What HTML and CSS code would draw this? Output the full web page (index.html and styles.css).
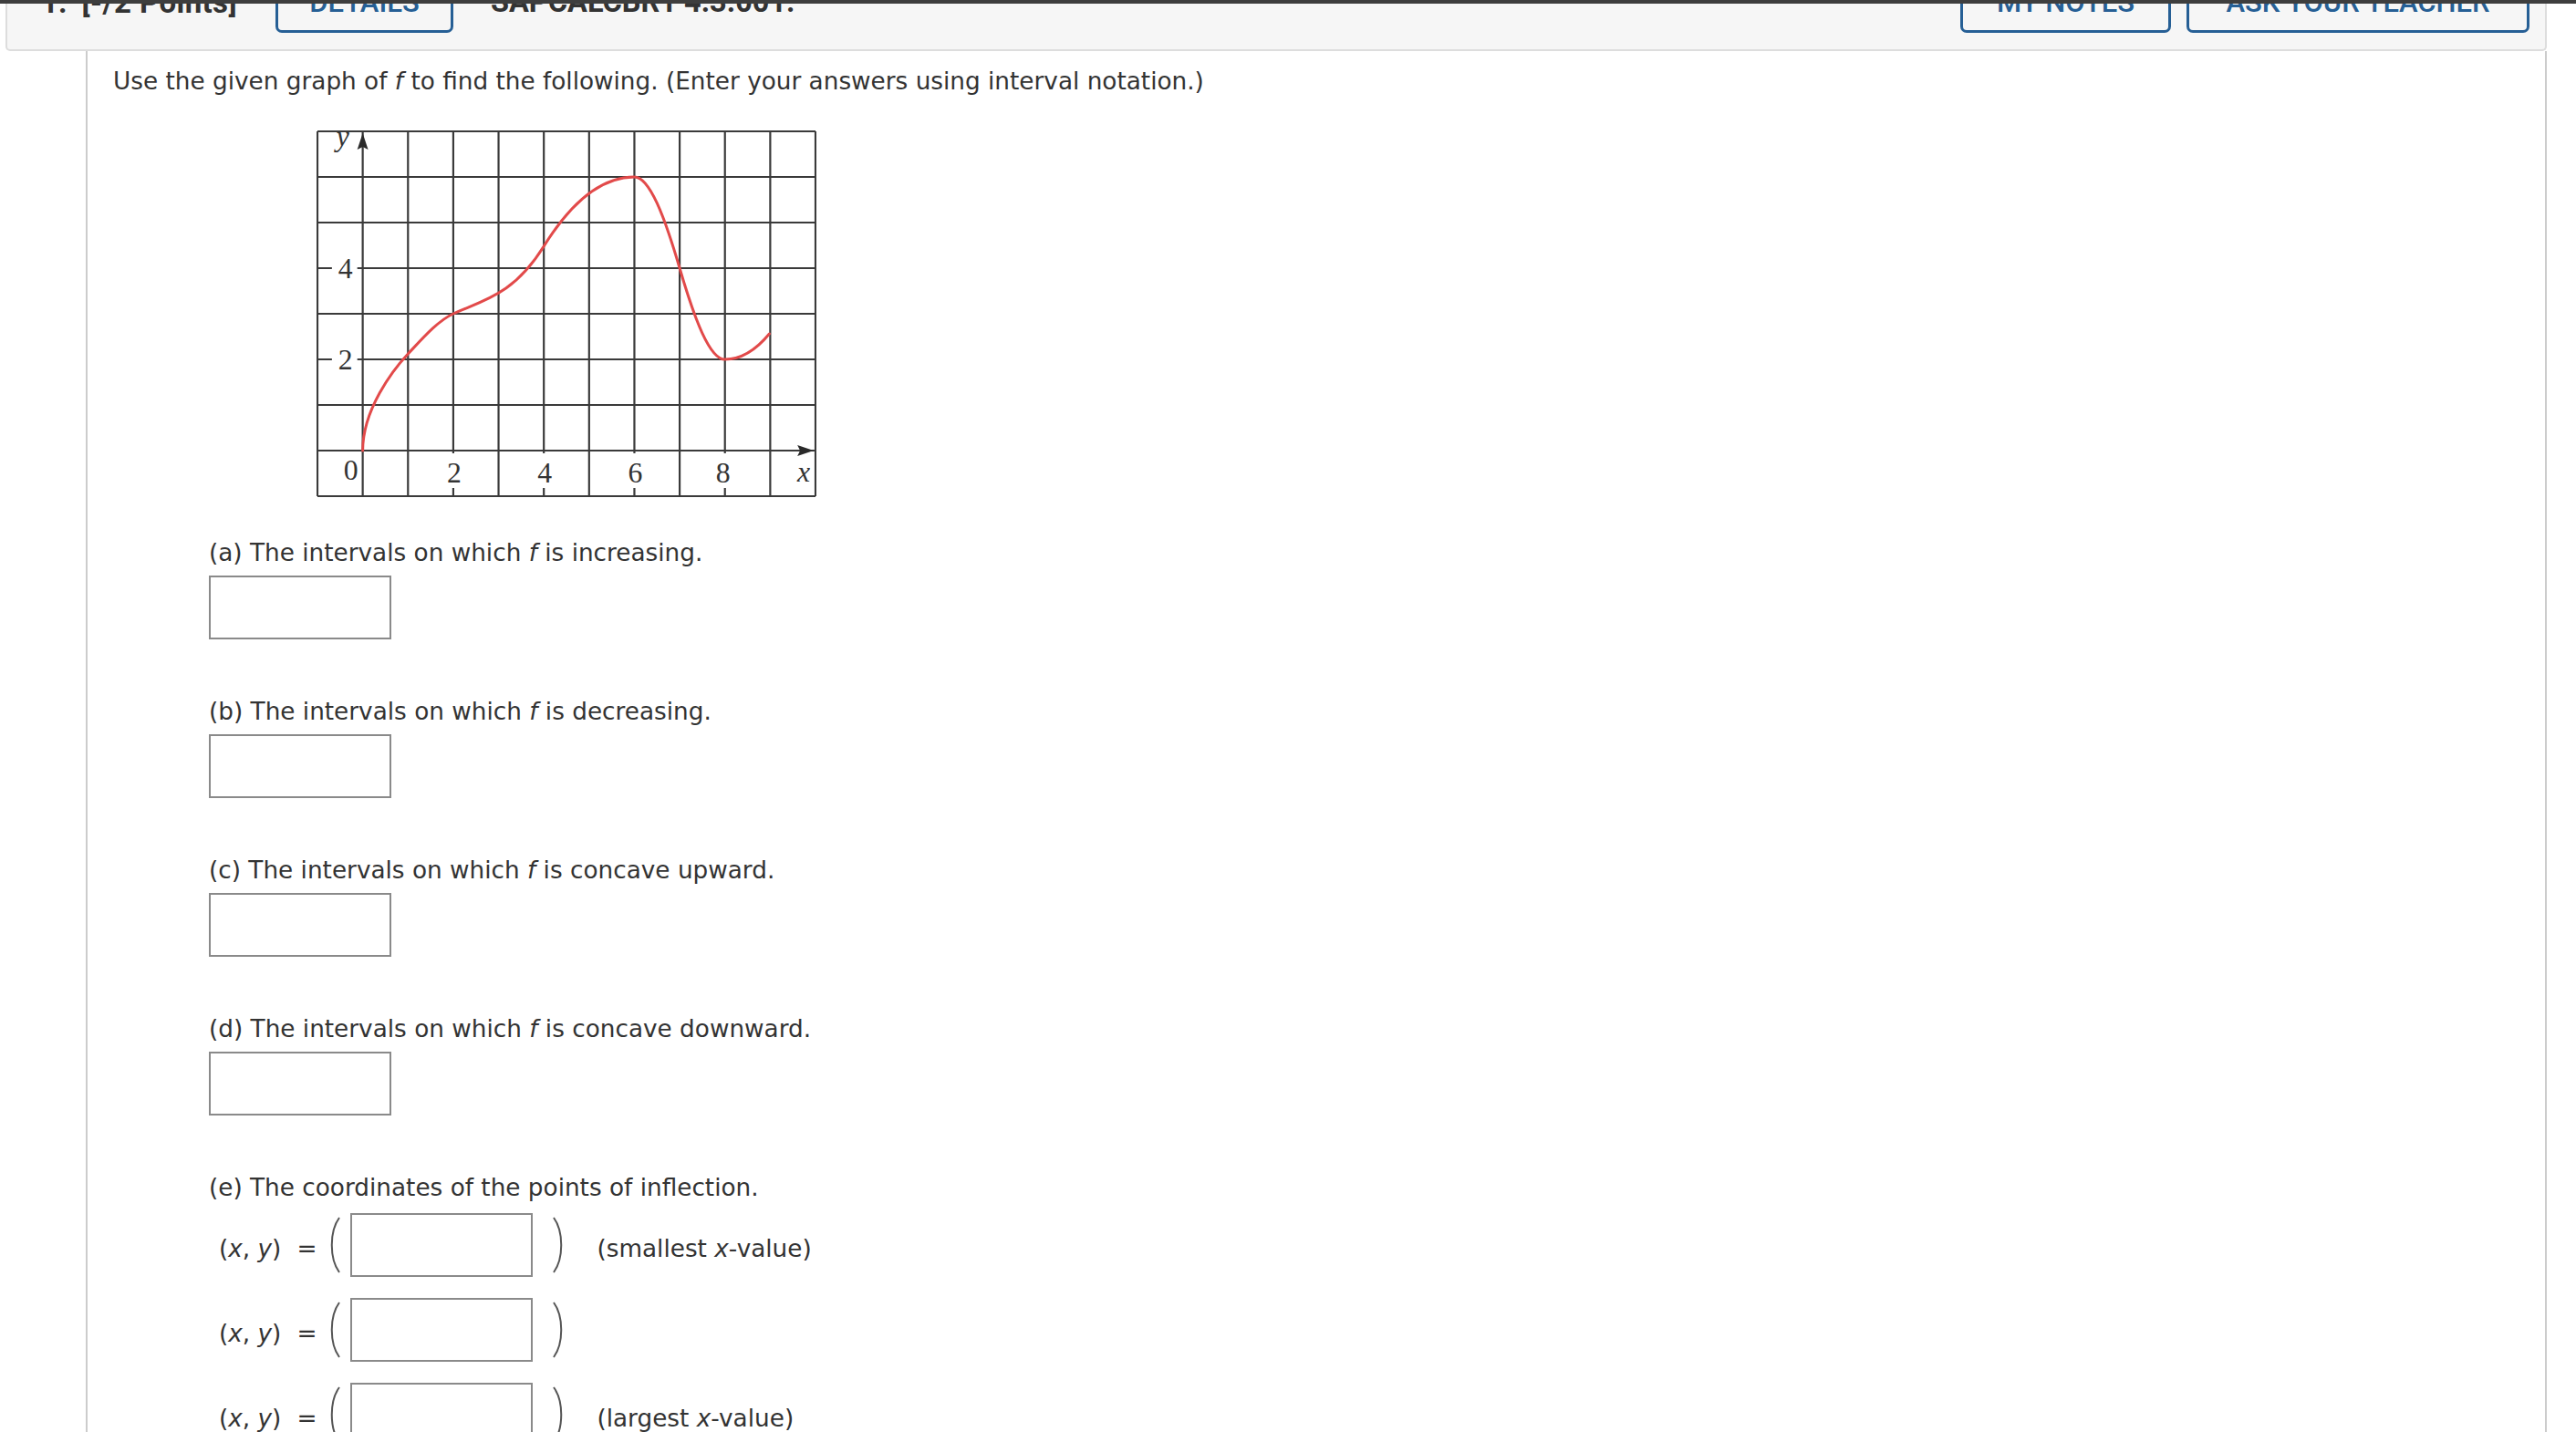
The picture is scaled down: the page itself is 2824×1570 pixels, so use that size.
FILE: index.html
```html
<!DOCTYPE html>
<html lang="en">
<head>
<meta charset="utf-8">
<title>Question</title>
<link rel="stylesheet" href="styles.css">
</head>
<body>
<div class="topbar"></div>
<div class="qhead">
  <div class="qnum">1.</div>
  <div class="qpts">[-/2 Points]</div>
  <button class="btn btn-details">DETAILS</button>
  <div class="qid">SAPCALCBR1 4.3.001.</div>
  <div class="spacer"></div>
  <button class="btn btn-notes">MY NOTES</button>
  <button class="btn btn-ask">ASK YOUR TEACHER</button>
</div>
<div class="qbody">
  <p class="intro">Use the given graph of <i>f</i> to find the following. (Enter your answers using interval notation.)</p>
  <svg class="graph" width="548" height="402" viewBox="0 0 552 402" preserveAspectRatio="none">
    <g transform="translate(1,1)">
      <path class="grid" d="M0,0V400M50,0V400M100,0V400M150,0V400M200,0V400M250,0V400M300,0V400M350,0V400M400,0V400M450,0V400M500,0V400M550,0V400M0,0H550M0,50H550M0,100H550M0,150H550M0,200H550M0,250H550M0,300H550M0,350H550M0,400H550"/>
      <rect class="mask" x="136" y="353" width="28" height="38"/>
      <rect class="mask" x="236" y="353" width="28" height="38"/>
      <rect class="mask" x="336" y="353" width="28" height="38"/>
      <rect class="mask" x="436" y="353" width="28" height="38"/>
      <rect class="mask" x="16" y="135" width="28" height="30"/>
      <rect class="mask" x="16" y="235" width="28" height="30"/>
      <text class="glabel" x="37" y="382" text-anchor="middle">0</text>
      <text class="glabel" x="151" y="385" text-anchor="middle">2</text>
      <text class="glabel" x="251" y="385" text-anchor="middle">4</text>
      <text class="glabel" x="351" y="385" text-anchor="middle">6</text>
      <text class="glabel" x="448" y="385" text-anchor="middle">8</text>
      <text class="glabel" x="31" y="161" text-anchor="middle">4</text>
      <text class="glabel" x="31" y="261" text-anchor="middle">2</text>
      <text class="glabel gvar" x="537" y="384" text-anchor="middle">x</text>
      <text class="glabel gvar" x="28" y="16" text-anchor="middle">y</text>
      <path class="arrow" d="M50,2 L56,20 L50,17 L44,20 Z"/>
      <path class="arrow" d="M548,350 L530,344 L533,350 L530,356 Z"/>
      <path class="curve" d="M50,350 C50,305 83.3,261.7 100,244 C116.7,226.3 133.3,207.5 150,200 C183.3,185 216.7,179.3 250,126 C283.3,72.7 316.7,50 350,50 C366.7,50 383.3,93.3 400,150 C416.7,206.7 433.3,250 450,250 C466.3,250 482.7,241.6 499,222"/>
    </g>
  </svg>
  <div class="parts">
    <div class="part">
      <p class="plabel">(a) The intervals on which <i>f</i> is increasing.</p>
      <input class="ans" type="text">
    </div>
    <div class="part">
      <p class="plabel">(b) The intervals on which <i>f</i> is decreasing.</p>
      <input class="ans" type="text">
    </div>
    <div class="part">
      <p class="plabel">(c) The intervals on which <i>f</i> is concave upward.</p>
      <input class="ans" type="text">
    </div>
    <div class="part">
      <p class="plabel">(d) The intervals on which <i>f</i> is concave downward.</p>
      <input class="ans" type="text">
    </div>
    <div class="part">
      <p class="plabel">(e) The coordinates of the points of inflection.</p>
      <div class="coords">
        <div class="crow">
          <span class="xy">(<i>x</i>, <i>y</i>)</span><span class="eq">=</span>
          <svg class="paren" width="16" height="62" viewBox="0 0 16 62"><path d="M13,1 C2,16 2,46 13,61"/></svg>
          <input class="ans" type="text">
          <svg class="paren rparen" width="16" height="62" viewBox="0 0 16 62"><path d="M3,1 C14,16 14,46 3,61"/></svg>
          <span class="note">(smallest <i>x</i>-value)</span>
        </div>
        <div class="crow">
          <span class="xy">(<i>x</i>, <i>y</i>)</span><span class="eq">=</span>
          <svg class="paren" width="16" height="62" viewBox="0 0 16 62"><path d="M13,1 C2,16 2,46 13,61"/></svg>
          <input class="ans" type="text">
          <svg class="paren rparen" width="16" height="62" viewBox="0 0 16 62"><path d="M3,1 C14,16 14,46 3,61"/></svg>
        </div>
        <div class="crow">
          <span class="xy">(<i>x</i>, <i>y</i>)</span><span class="eq">=</span>
          <svg class="paren" width="16" height="62" viewBox="0 0 16 62"><path d="M13,1 C2,16 2,46 13,61"/></svg>
          <input class="ans" type="text">
          <svg class="paren rparen" width="16" height="62" viewBox="0 0 16 62"><path d="M3,1 C14,16 14,46 3,61"/></svg>
          <span class="note">(largest <i>x</i>-value)</span>
        </div>
      </div>
    </div>
  </div>
</div>
</body>
</html>
```
FILE: styles.css
```css
* { box-sizing: border-box; }

html, body {
  margin: 0;
  padding: 0;
  background: #ffffff;
}

body {
  width: 2824px;
  height: 1570px;
  overflow: hidden;
  font-family: "DejaVu Sans", Verdana, sans-serif;
  color: #333333;
}

.topbar {
  height: 4px;
  background: #3e3e3e;
}

.qhead {
  margin-left: 6px;
  width: 2786px;
  height: 52px;
  background: #f6f6f6;
  border: 2px solid #dddddd;
  border-top: none;
  border-radius: 0 0 5px 5px;
  display: flex;
  align-items: flex-end;
  padding: 0 17px 0 37px;
  overflow: hidden;
  font-family: Roboto, "Liberation Sans", sans-serif;
}

.qnum, .qpts, .qid {
  font-weight: 700;
  font-size: 33px;
  line-height: 33px;
  margin-bottom: 35px;
  color: #333333;
  white-space: pre;
}

.qpts { margin-left: 16px; letter-spacing: 0.4px; }

.qid { margin-left: 41px; font-size: 32.5px; }

.spacer { flex: 1; }

.btn {
  height: 68px;
  margin-bottom: 18px;
  border: 3px solid #265f95;
  border-radius: 7px;
  background: transparent;
  color: #265f95;
  font-family: Roboto, "Liberation Sans", sans-serif;
  font-weight: 500;
  font-size: 31px;
  line-height: 31px;
  padding: 0 30px;
  display: flex;
  align-items: center;
  justify-content: center;
  flex: none;
}

.btn-details { margin-left: 42px; width: 195px; }
.btn-notes { width: 231px; }
.btn-ask { margin-left: 17px; width: 376px; }

.qbody {
  margin-left: 94px;
  width: 2698px;
  min-height: 1520px;
  border-left: 2px solid #cccccc;
  border-right: 2px solid #cccccc;
  padding: 17px 0 0 28px;
}

.intro {
  margin: 0;
  font-size: 26.3px;
  line-height: 32px;
}

.graph {
  display: block;
  margin: 38px 0 0 223px;
}

.grid {
  fill: none;
  stroke: #3a3a3a;
  stroke-width: 2.2;
}

.mask { fill: #ffffff; }

.glabel {
  font-family: "Liberation Serif", "Times New Roman", serif;
  font-size: 32px;
  fill: #333333;
}

.gvar { font-style: italic; }

.arrow { fill: #2a2a2a; }

.curve {
  fill: none;
  stroke: #e24a4a;
  stroke-width: 3;
  stroke-linecap: round;
}

.parts {
  margin: 45px 0 0 105px;
}

.part + .part { margin-top: 63px; }

.plabel {
  margin: 0 0 9px 0;
  font-size: 26.3px;
  line-height: 32px;
}

.ans {
  display: block;
  width: 200px;
  height: 70px;
  margin: 0;
  border: 2px solid #8a8a8a;
  border-radius: 0;
  background: #ffffff;
  padding: 0 8px;
  font-size: 26px;
}

.coords {
  margin-top: 12px;
  display: flex;
  flex-direction: column;
  gap: 23px;
}

.crow {
  display: flex;
  align-items: center;
  height: 70px;
  font-size: 26.3px;
  line-height: 32px;
}

.crow .xy, .crow .eq, .crow .note { position: relative; top: 4px; }

.xy { margin-left: 11px; }
.eq { margin-left: 17px; }

.paren {
  display: block;
  margin-left: 12px;
  flex: none;
}

.paren path {
  fill: none;
  stroke: #555555;
  stroke-width: 2;
}

.crow .ans { margin-left: 9px; }
.rparen { margin-left: 20px; }

.note { margin-left: 34px; }
```
